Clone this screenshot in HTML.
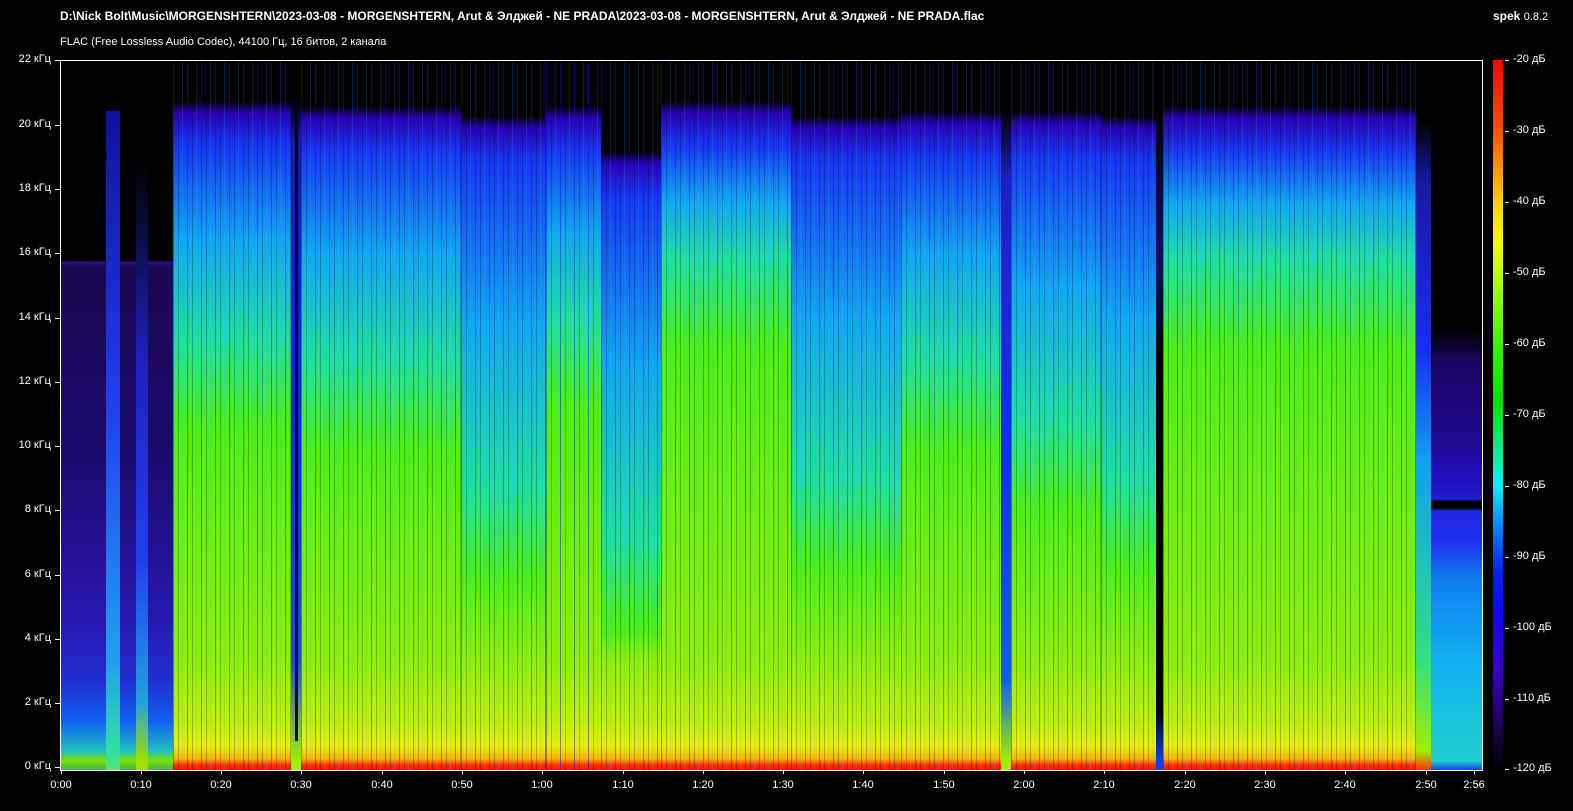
<!DOCTYPE html>
<html><head><meta charset="utf-8"><style>
body{margin:0;background:#000;width:1573px;height:811px;overflow:hidden;position:relative;font-family:"Liberation Sans","Noto Sans CJK SC",sans-serif;color:#fff}
.t{position:absolute;font-size:12px;white-space:nowrap}
#plot{position:absolute;left:60px;top:60px;width:1421px;height:709px;border:1px solid #fff;overflow:hidden;background:#000}
.s{position:absolute;top:0;height:709px;
background:
repeating-linear-gradient(90deg,rgba(10,10,230,.45) 0 1px,transparent 1px 5px,rgba(0,0,0,.25) 5px 6px,transparent 6px 9px,rgba(0,200,255,.18) 9px 10px,transparent 10px 14px),
linear-gradient(to bottom,#000 0,#000 calc(var(--t)*1px),#2a00b0 calc(var(--t)*1px + 12px),#1838f0 calc(var(--t)*1px + 45px),#10a8f0 calc((var(--t) + var(--g))*0.5px + 20px),#20e0a0 calc(var(--g)*1px),#50f010 calc(var(--g)*1px + 90px),#90f000 600px,#c0f000 660px,#e8f000 685px,#ffb000 698px,#ff3000 704px,#ff1000 709px);}
.y{position:absolute;right:1522px;font-size:11px;text-align:right;white-space:nowrap}
.yt{position:absolute;left:55px;width:5px;height:1px;background:#fff}
.x{position:absolute;top:779px;font-size:11px;width:40px;text-align:center;margin-left:-20px}
.xt{position:absolute;top:770px;width:1px;height:4px;background:#fff}
.d{position:absolute;left:1513px;font-size:11px;white-space:nowrap}
.dt{position:absolute;left:1505px;width:4px;height:1px;background:#fff}
</style></head><body>
<div class="t" style="left:60px;top:9px;font-weight:bold">D:\Nick Bolt\Music\MORGENSHTERN\2023-03-08 - MORGENSHTERN, Arut &amp; Элджей - NE PRADA\2023-03-08 - MORGENSHTERN, Arut &amp; Элджей - NE PRADA.flac</div>
<div class="t" style="left:1493px;top:9px"><b>spek</b> <span style="font-size:11px">0.8.2</span></div>
<div class="t" style="left:60px;top:36px;font-size:11px">FLAC (Free Lossless Audio Codec), 44100 Гц, 16 битов, 2 канала</div>

<div id="plot">
 <div style="position:absolute;left:0;top:0;width:112px;height:709px;background:linear-gradient(to bottom,#000 0,#000 200px,#3010a0 201px,#1a0850 205px,#1c0a70 400px,#2818b0 560px,#2030d0 620px,#1060f0 660px,#20c0c0 690px,#80e000 700px,#40b060 709px)"></div>
 <div style="position:absolute;left:45px;top:50px;width:14px;height:659px;background:linear-gradient(to bottom,#1010a0,#2040f0 300px,#20a0f0 550px,#30e0a0 640px,#a0f000 700px)"></div>
 <div style="position:absolute;left:75px;top:0;width:12px;height:709px;background:linear-gradient(to bottom,#000 100px,#2020c0 300px,#2040f0 500px,#20a0e0 640px,#a0e000 700px)"></div>
 <div class="s" style="left:112px;width:118px;--t:40;--g:280"></div>
 <div style="position:absolute;left:230px;top:0;width:10px;height:709px;background:linear-gradient(to bottom,#000 40px,#1818a0 80px,#1020f0 300px,#1050f0 600px,#a0f000 700px)"></div>
 <div style="position:absolute;left:234px;top:40px;width:3px;height:640px;background:#000030"></div>
 <div class="s" style="left:240px;width:160px;--t:45;--g:300"></div>
 <div class="s" style="left:400px;width:85px;--t:55;--g:430"></div>
 <div class="s" style="left:485px;width:55px;--t:45;--g:260"></div>
 <div class="s" style="left:540px;width:60px;--t:90;--g:480"></div>
 <div class="s" style="left:600px;width:130px;--t:40;--g:200"></div>
 <div class="s" style="left:730px;width:110px;--t:55;--g:420"></div>
 <div class="s" style="left:840px;width:100px;--t:50;--g:300"></div>
 <div style="position:absolute;left:940px;top:0;width:10px;height:709px;background:linear-gradient(to bottom,#000 50px,#2020c0 120px,#1030f0 400px,#1060f0 620px,#a0f000 700px)"></div>
 <div class="s" style="left:950px;width:90px;--t:50;--g:360"></div>
 <div class="s" style="left:1040px;width:55px;--t:55;--g:420"></div>
 <div style="position:absolute;left:1095px;top:0;width:7px;height:709px;background:linear-gradient(to bottom,#000 40px,#101060 200px,#000 300px,#000 650px,#1040f0 700px)"></div>
 <div class="s" style="left:1102px;width:253px;--t:45;--g:200"></div>
 <div style="position:absolute;left:1355px;top:0;width:15px;height:709px;background:linear-gradient(to bottom,#000 60px,#1818a0 120px,#1830f0 290px,#10a0f0 400px,#30e080 600px,#a0f000 690px,#ff3000 709px)"></div>
 <div style="position:absolute;left:1370px;top:0;width:51px;height:709px;background:linear-gradient(to bottom,#000 270px,#1a0660 300px,#200890 380px,#2010c0 420px,#2020d0 438px,#000 441px,#000 447px,#2028e0 450px,#2030f0 480px,#1080f0 520px,#10b0f0 600px,#20d0d0 700px,#1040f0 709px)"></div>
</div>

<div class="y" style="top:53px">22 кГц</div><div class="yt" style="top:60px"></div>
<div class="y" style="top:118px">20 кГц</div><div class="yt" style="top:125px"></div>
<div class="y" style="top:182px">18 кГц</div><div class="yt" style="top:189px"></div>
<div class="y" style="top:246px">16 кГц</div><div class="yt" style="top:253px"></div>
<div class="y" style="top:311px">14 кГц</div><div class="yt" style="top:318px"></div>
<div class="y" style="top:375px">12 кГц</div><div class="yt" style="top:382px"></div>
<div class="y" style="top:439px">10 кГц</div><div class="yt" style="top:446px"></div>
<div class="y" style="top:503px">8 кГц</div><div class="yt" style="top:510px"></div>
<div class="y" style="top:568px">6 кГц</div><div class="yt" style="top:575px"></div>
<div class="y" style="top:632px">4 кГц</div><div class="yt" style="top:639px"></div>
<div class="y" style="top:696px">2 кГц</div><div class="yt" style="top:703px"></div>
<div class="y" style="top:760px">0 кГц</div><div class="yt" style="top:767px"></div>

<div class="x" style="left:61px">0:00</div><div class="xt" style="left:61px"></div>
<div class="x" style="left:141px">0:10</div><div class="xt" style="left:141px"></div>
<div class="x" style="left:221px">0:20</div><div class="xt" style="left:221px"></div>
<div class="x" style="left:301px">0:30</div><div class="xt" style="left:301px"></div>
<div class="x" style="left:382px">0:40</div><div class="xt" style="left:382px"></div>
<div class="x" style="left:462px">0:50</div><div class="xt" style="left:462px"></div>
<div class="x" style="left:542px">1:00</div><div class="xt" style="left:542px"></div>
<div class="x" style="left:623px">1:10</div><div class="xt" style="left:623px"></div>
<div class="x" style="left:703px">1:20</div><div class="xt" style="left:703px"></div>
<div class="x" style="left:783px">1:30</div><div class="xt" style="left:783px"></div>
<div class="x" style="left:863px">1:40</div><div class="xt" style="left:863px"></div>
<div class="x" style="left:944px">1:50</div><div class="xt" style="left:944px"></div>
<div class="x" style="left:1024px">2:00</div><div class="xt" style="left:1024px"></div>
<div class="x" style="left:1104px">2:10</div><div class="xt" style="left:1104px"></div>
<div class="x" style="left:1185px">2:20</div><div class="xt" style="left:1185px"></div>
<div class="x" style="left:1265px">2:30</div><div class="xt" style="left:1265px"></div>
<div class="x" style="left:1345px">2:40</div><div class="xt" style="left:1345px"></div>
<div class="x" style="left:1426px">2:50</div><div class="xt" style="left:1426px"></div>
<div class="x" style="left:1474px">2:56</div><div class="xt" style="left:1474px"></div>

<div style="position:absolute;left:1493px;top:60px;width:10px;height:710px;background:linear-gradient(to bottom,#ff0000 0%,#ff5000 10%,#ffd000 20%,#f0ff00 26%,#a0ff00 32%,#40f000 40%,#00e000 48%,#00f0a0 56%,#00f0ff 60%,#0080ff 66%,#0020ff 72%,#1000ff 78%,#3800c0 86%,#200060 93%,#000 100%)"></div>
<div class="d" style="top:53px">-20 дБ</div><div class="dt" style="top:60px"></div>
<div class="d" style="top:124px">-30 дБ</div><div class="dt" style="top:131px"></div>
<div class="d" style="top:195px">-40 дБ</div><div class="dt" style="top:202px"></div>
<div class="d" style="top:266px">-50 дБ</div><div class="dt" style="top:273px"></div>
<div class="d" style="top:337px">-60 дБ</div><div class="dt" style="top:344px"></div>
<div class="d" style="top:408px">-70 дБ</div><div class="dt" style="top:415px"></div>
<div class="d" style="top:479px">-80 дБ</div><div class="dt" style="top:486px"></div>
<div class="d" style="top:550px">-90 дБ</div><div class="dt" style="top:557px"></div>
<div class="d" style="top:621px">-100 дБ</div><div class="dt" style="top:628px"></div>
<div class="d" style="top:692px">-110 дБ</div><div class="dt" style="top:699px"></div>
<div class="d" style="top:762px">-120 дБ</div><div class="dt" style="top:769px"></div>
</body></html>
